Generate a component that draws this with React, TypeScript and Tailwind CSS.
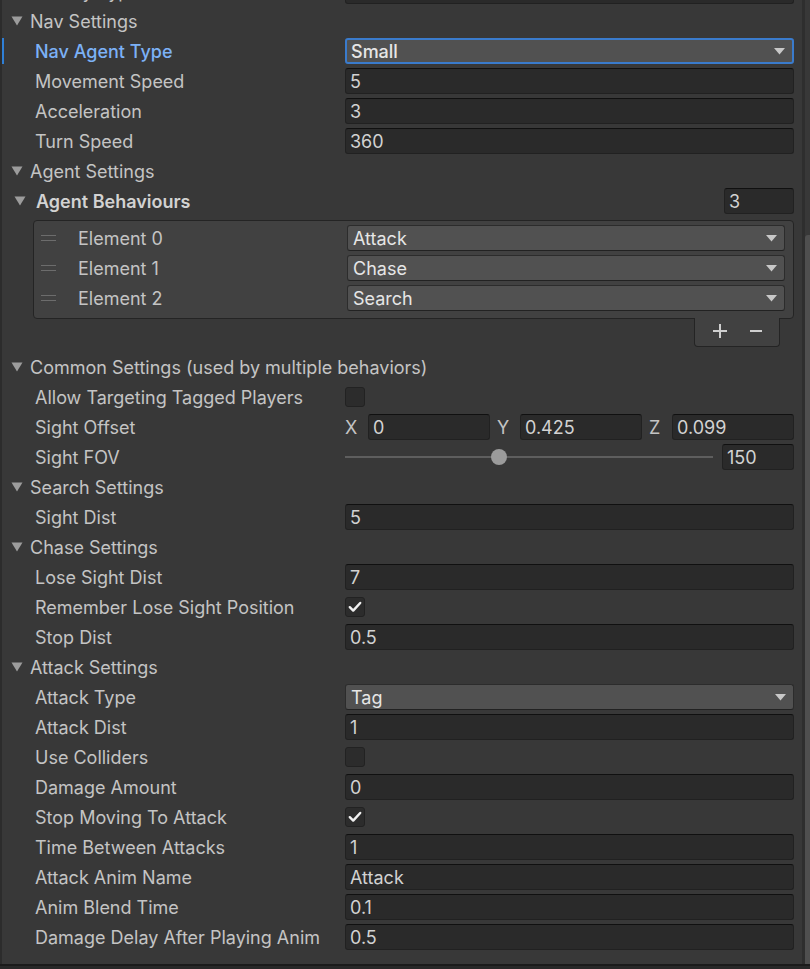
import React from "react";

function HeaderTri({ className = "" }: { className?: string }) {
  return (
    <svg width="12" height="10" viewBox="0 0 12 10" className={className}>
      <path d="M0.5 0.5 H11.5 L6 9.5 Z" fill="#9c9c9c" />
    </svg>
  );
}

function DropTri() {
  return (
    <svg width="11" height="7" viewBox="0 0 11 7">
      <path d="M0 0 H11 L5.5 6.5 Z" fill="#c8c8c8" />
    </svg>
  );
}

function Section({ label }: { label: string }) {
  return (
    <div className="flex h-[30px] items-center pl-[11px] text-[#c4c4c4]">
      <HeaderTri />
      <span className="ml-[7px] pt-[2px]">{label}</span>
    </div>
  );
}

function Row({
  label,
  children,
  active,
}: {
  label: string;
  children?: React.ReactNode;
  active?: boolean;
}) {
  return (
    <div className="relative flex h-[30px] items-center">
      {active && (
        <div className="absolute left-[2px] top-[2px] h-[26px] w-[2px] bg-[#2f7fd6]" />
      )}
      <div
        className={`w-[345px] shrink-0 whitespace-nowrap pl-[35px] pt-[2px] ${
          active ? "font-medium text-[#7cb1f6]" : "text-[#c4c4c4]"
        }`}
      >
        {label}
      </div>
      <div className="flex min-w-0 flex-1 items-center">{children}</div>
    </div>
  );
}

function Field({ value, className = "" }: { value: string; className?: string }) {
  return (
    <div
      className={`flex h-[26px] w-full items-center rounded-[3px] border border-[#212121] border-t-[#101010] bg-[#2a2a2a] pl-[4px] pt-[2px] text-[#d2d2d2] ${className}`}
    >
      {value}
    </div>
  );
}

function Dropdown({ value, active }: { value: string; active?: boolean }) {
  return (
    <div
      className={`flex h-[26px] w-full items-center justify-between rounded-[3px] bg-[#515151] pr-[7px] text-[#e6e6e6] ${
        active
          ? "border-2 border-[#3a7bcc] pl-[4px] font-medium"
          : "border border-[#2c2c2c] border-b-[#222222] pl-[5px]"
      }`}
    >
      <span className="pt-[2px]">{value}</span>
      <DropTri />
    </div>
  );
}

function Checkbox({ checked }: { checked?: boolean }) {
  return (
    <div className="flex h-[20px] w-[20px] items-center justify-center rounded-[3px] border border-[#222222] bg-[#2c2c2c]">
      {checked && (
        <svg width="14" height="12" viewBox="0 0 14 12">
          <path
            d="M1.8 6.2 L5.2 9.6 L12.2 2"
            fill="none"
            stroke="#f0f0f0"
            strokeWidth="2.4"
            strokeLinecap="round"
            strokeLinejoin="round"
          />
        </svg>
      )}
    </div>
  );
}

function Handle() {
  return (
    <div className="flex w-[15px] shrink-0 flex-col gap-[4px]">
      <div className="h-[1px] bg-[#6c6c6c]" />
      <div className="h-[1px] bg-[#6c6c6c]" />
    </div>
  );
}

function ListElement({ label, value }: { label: string; value: string }) {
  return (
    <div className="flex h-[30px] items-center pl-[7px] pr-[8px]">
      <Handle />
      <div className="ml-[22px] w-[269px] shrink-0 pt-[2px] text-[#c4c4c4]">{label}</div>
      <div className="flex-1">
        <Dropdown value={value} />
      </div>
    </div>
  );
}

export default function App() {
  return (
    <div
      className="flex h-[969px] w-[810px] flex-col overflow-hidden bg-[#383838] text-[18px] leading-none"
      style={{ fontFamily: "Inter, 'Noto Sans', sans-serif" }}
    >
      <div className="flex min-h-0 flex-1">
        <div className="w-[802px] shrink-0 pr-[8px] shadow-[inset_2px_0_0_#2c2c2c]">
          <div className="-mt-[24px]">
            <Row label="Enemy Type">
              <Field value="" />
            </Row>
            <Section label="Nav Settings" />
            <Row label="Nav Agent Type" active>
              <Dropdown value="Small" active />
            </Row>
            <Row label="Movement Speed">
              <Field value="5" />
            </Row>
            <Row label="Acceleration">
              <Field value="3" />
            </Row>
            <Row label="Turn Speed">
              <Field value="360" />
            </Row>
            <Section label="Agent Settings" />
            <div className="flex h-[30px] items-center pl-[14px]">
              <HeaderTri />
              <span className="ml-[10px] pt-[2px] font-semibold text-[#d2d2d2]">Agent Behaviours</span>
              <div className="ml-auto w-[70px]">
                <Field value="3" />
              </div>
            </div>
            <div className="ml-[33px] mt-[4px] rounded-[4px] border border-[#242424] bg-[#414141] pb-[5px] pt-[2px]">
              <ListElement label="Element 0" value="Attack" />
              <ListElement label="Element 1" value="Chase" />
              <ListElement label="Element 2" value="Search" />
            </div>
            <div className="flex justify-end pr-[14px]">
              <div className="relative z-10 -mt-[1px] flex h-[29px] w-[86px] items-center justify-center gap-[21px] rounded-b-[4px] border border-t-0 border-[#242424] bg-[#414141] pb-[2px]">
                <svg width="16" height="16" viewBox="0 0 16 16">
                  <path d="M8 1 V15 M1 8 H15" stroke="#cfcfcf" strokeWidth="2" />
                </svg>
                <svg width="14" height="16" viewBox="0 0 14 16">
                  <path d="M1 8 H13" stroke="#cfcfcf" strokeWidth="2" />
                </svg>
              </div>
            </div>
            <div className="mt-[5px]">
              <Section label="Common Settings (used by multiple behaviors)" />
              <Row label="Allow Targeting Tagged Players">
                <Checkbox />
              </Row>
              <Row label="Sight Offset">
                <div className="grid w-full grid-cols-3 gap-[7px] text-[#c4c4c4]">
                  <div className="flex items-center">
                    <span className="w-[23px] shrink-0 pt-[2px]">X</span>
                    <Field value="0" />
                  </div>
                  <div className="flex items-center">
                    <span className="w-[23px] shrink-0 pt-[2px]">Y</span>
                    <Field value="0.425" />
                  </div>
                  <div className="flex items-center">
                    <span className="w-[23px] shrink-0 pt-[2px]">Z</span>
                    <Field value="0.099" />
                  </div>
                </div>
              </Row>
              <Row label="Sight FOV">
                <div className="flex w-full items-center">
                  <div className="relative h-[2px] w-[368px] shrink-0 bg-[#5e5e5e]">
                    <div className="absolute left-[146px] top-[-7px] h-[16px] w-[16px] rounded-full bg-[#9b9b9b]" />
                  </div>
                  <div className="ml-auto w-[72px]">
                    <Field value="150" />
                  </div>
                </div>
              </Row>
              <Section label="Search Settings" />
              <Row label="Sight Dist">
                <Field value="5" />
              </Row>
              <Section label="Chase Settings" />
              <Row label="Lose Sight Dist">
                <Field value="7" />
              </Row>
              <Row label="Remember Lose Sight Position">
                <Checkbox checked />
              </Row>
              <Row label="Stop Dist">
                <Field value="0.5" />
              </Row>
              <Section label="Attack Settings" />
              <Row label="Attack Type">
                <Dropdown value="Tag" />
              </Row>
              <Row label="Attack Dist">
                <Field value="1" />
              </Row>
              <Row label="Use Colliders">
                <Checkbox />
              </Row>
              <Row label="Damage Amount">
                <Field value="0" />
              </Row>
              <Row label="Stop Moving To Attack">
                <Checkbox checked />
              </Row>
              <Row label="Time Between Attacks">
                <Field value="1" />
              </Row>
              <Row label="Attack Anim Name">
                <Field value="Attack" />
              </Row>
              <Row label="Anim Blend Time">
                <Field value="0.1" />
              </Row>
              <Row label="Damage Delay After Playing Anim">
                <Field value="0.5" />
              </Row>
            </div>
          </div>
        </div>
        <div className="flex w-[8px] shrink-0 flex-col">
          <div className="flex flex-1">
            <div className="w-[3px] bg-[#2e2e2e]" />
            <div className="flex flex-1 flex-col">
              <div className="h-[235px]" />
              <div className="flex-1 rounded-tl-[3px] bg-[#4f4f4f]" />
            </div>
          </div>
        </div>
      </div>
      <div className="h-[2px] bg-[#1b1b1b]" />
      <div className="h-[3px] bg-[#282828]" />
    </div>
  );
}
